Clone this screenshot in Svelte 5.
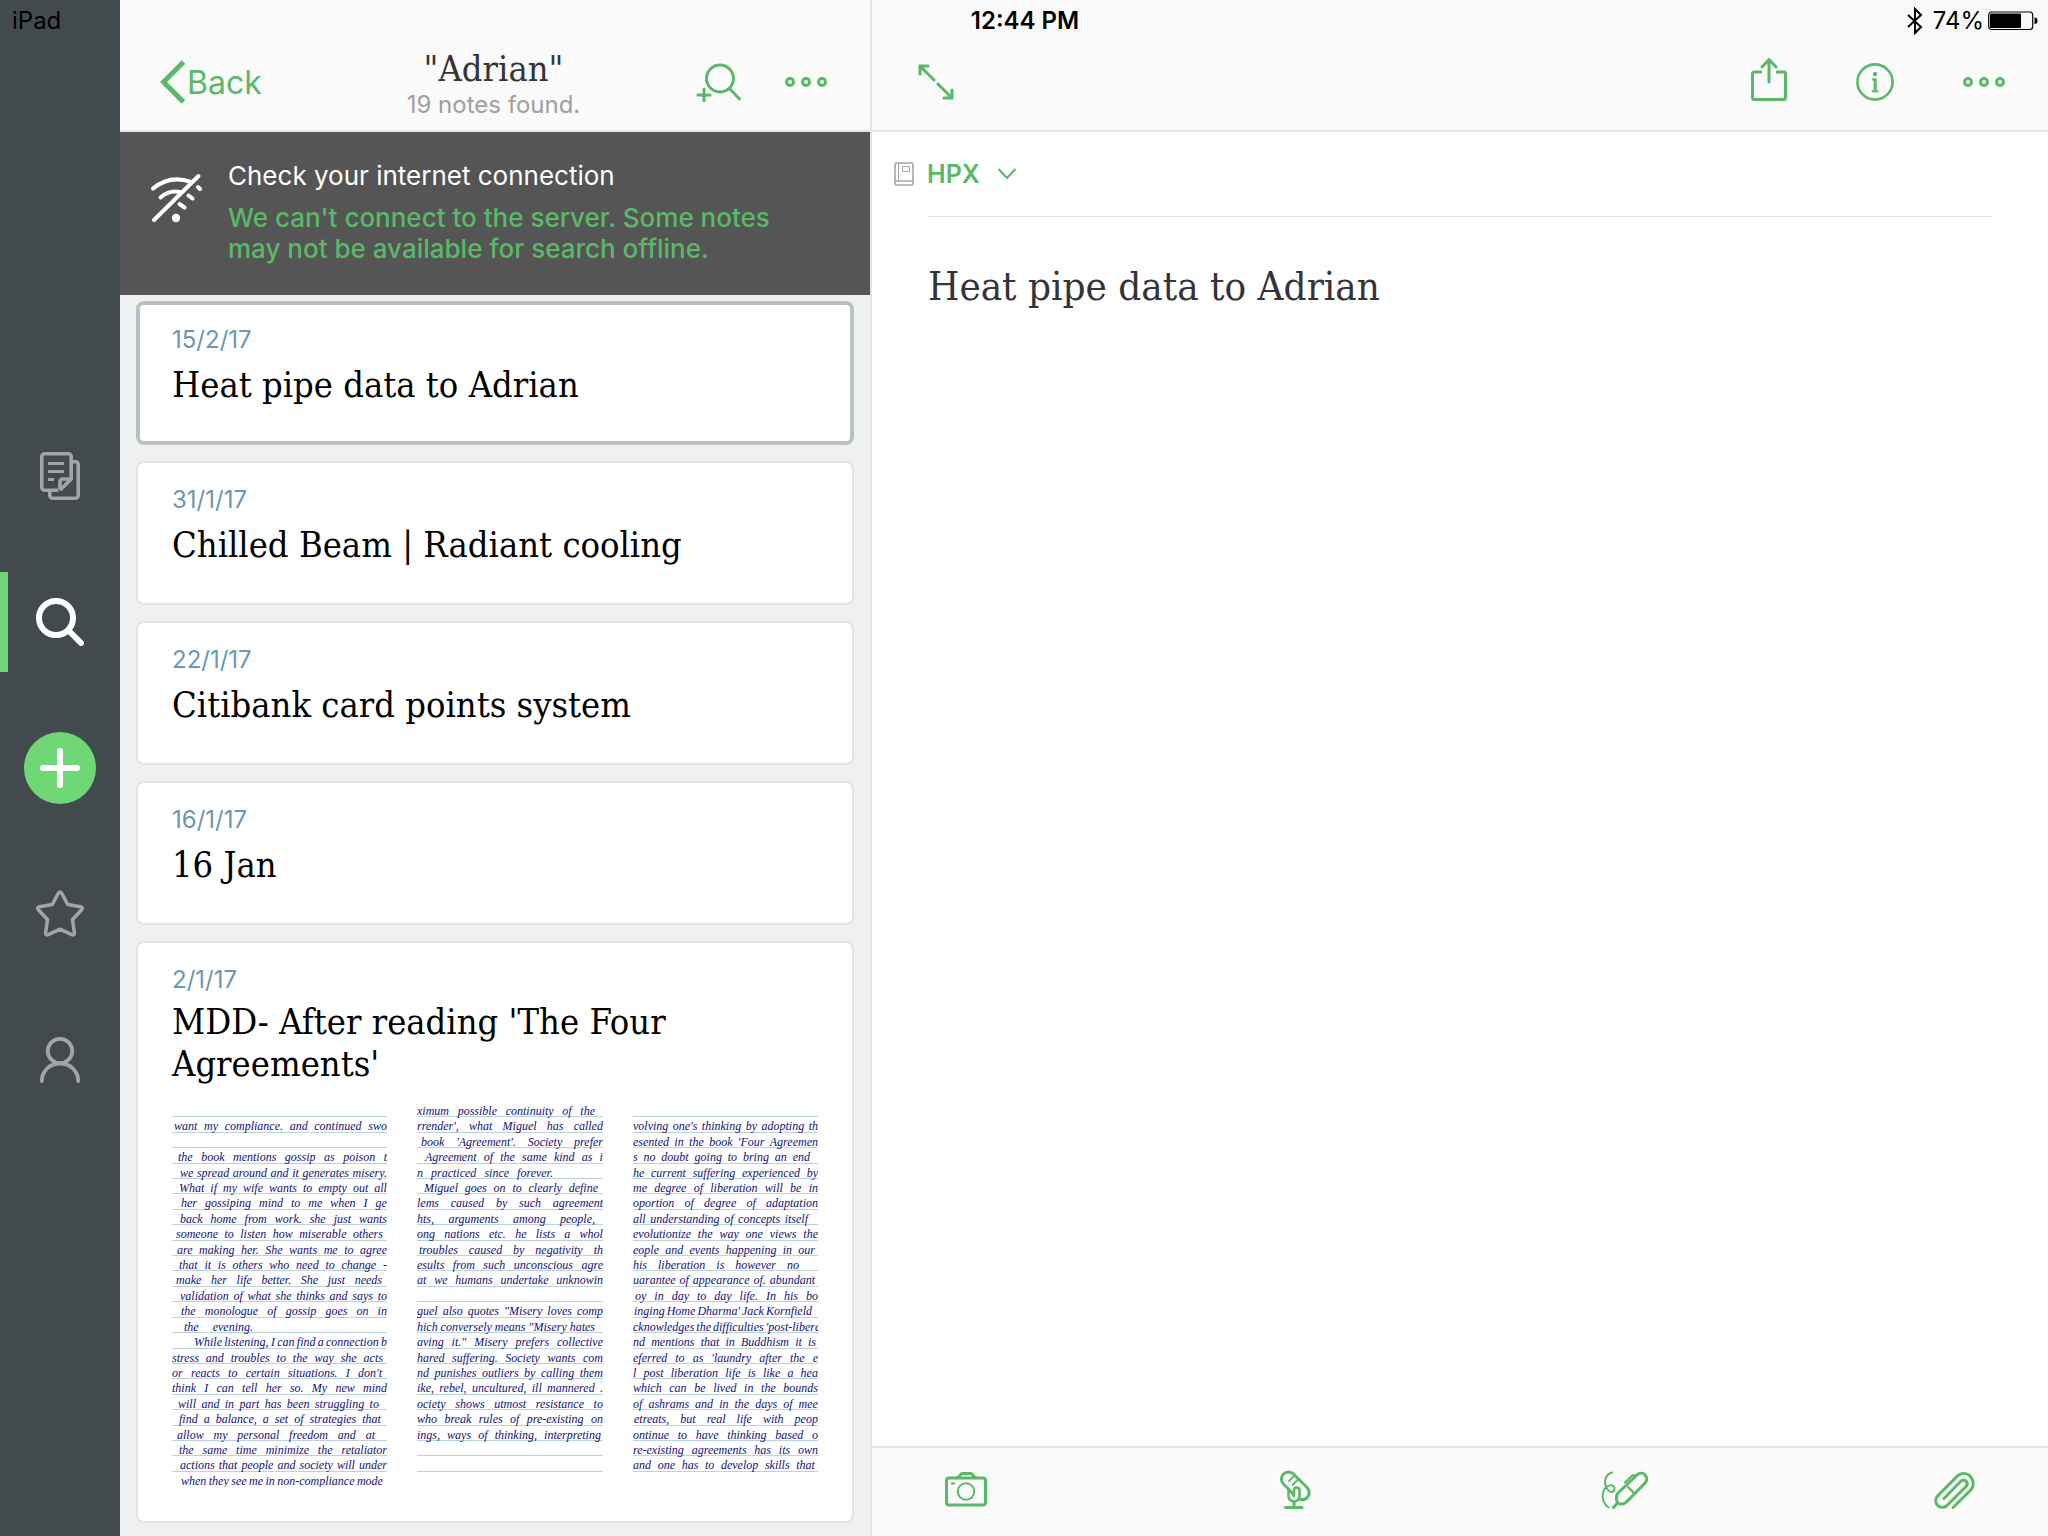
<script lang="ts">
    interface Line {
        text: string;
        from?: number;
        to?: number;
    }

    interface Note {
        date: string;
        title: string;
        pages?: Line[][];
    }

    // A ruled page has 25 rows, an empty text is a blank row.
    // from and to are the left and right margins of the writing, in px.
    const blank: Line = { text: "" };

    const page_one: Line[] = [
        blank,
        { text: "want my compliance. and continued swo", from: 2 },
        blank,
        { text: "the book mentions gossip as poison t", from: 6 },
        { text: "we spread around and it generates misery.", from: 8 },
        { text: "What if my wife wants to empty out all", from: 7 },
        { text: "her gossiping mind to me when I ge", from: 9 },
        { text: "back home from work. she just wants", from: 8 },
        { text: "someone to listen how miserable others", from: 4, to: 4 },
        { text: "are making her. She wants me to agree", from: 5 },
        { text: "that it is others who need to change -", from: 7 },
        { text: "make her life better. She just needs", from: 4, to: 5 },
        { text: "validation of what she thinks and says to", from: 8 },
        { text: "the monologue of gossip goes on in", from: 9 },
        { text: "the evening.", from: 12, to: 134 },
        { text: "While listening, I can find a connection b", from: 22 },
        { text: "stress and troubles to the way she acts", to: 4 },
        { text: "or reacts to certain situations. I don't", to: 5 },
        { text: "think I can tell her so. My new mind" },
        { text: "will and in part has been struggling to", from: 6, to: 8 },
        { text: "find a balance, a set of strategies that", from: 7, to: 6 },
        { text: "allow my personal freedom and at", from: 5, to: 12 },
        { text: "the same time minimize the retaliator", from: 7 },
        { text: "actions that people and society will under", from: 8 },
        { text: "when they see me in non-compliance mode", from: 9, to: 4 },
    ];

    const page_two: Line[] = [
        { text: "ximum possible continuity of the", to: 8 },
        { text: "rrender', what Miguel has called" },
        { text: "book 'Agreement'. Society prefer", from: 4 },
        { text: "Agreement of the same kind as i", from: 8 },
        { text: "n practiced since forever.", to: 50 },
        { text: "Miguel goes on to clearly define", from: 7, to: 5 },
        { text: "lems caused by such agreement" },
        { text: "hts, arguments among people,", to: 8 },
        { text: "ong nations etc. he lists a whol" },
        { text: "troubles caused by negativity th", from: 2 },
        { text: "esults from such unconscious agre" },
        { text: "at we humans undertake unknowin" },
        blank,
        { text: "guel also quotes \"Misery loves comp" },
        { text: "hich conversely means \"Misery hates", to: 8 },
        { text: "aving it.\" Misery prefers collective" },
        { text: "hared suffering. Society wants com" },
        { text: "nd punishes outliers by calling them" },
        { text: "ike, rebel, uncultured, ill mannered ." },
        { text: "ociety shows utmost resistance to" },
        { text: "who break rules of pre-existing on" },
        { text: "ings, ways of thinking, interpreting", to: 2 },
        blank,
        blank,
        blank,
    ];

    const page_three: Line[] = [
        blank,
        { text: "volving one's thinking by adopting th" },
        { text: "esented in the book 'Four Agreemen" },
        { text: "s no doubt going to bring an end", to: 8 },
        { text: "he current suffering experienced by" },
        { text: "me degree of liberation will be in" },
        { text: "oportion of degree of adaptation" },
        { text: "all understanding of concepts itself", to: 10 },
        { text: "evolutionize the way one views the" },
        { text: "eople and events happening in our", to: 3 },
        { text: "his liberation is however no", to: 19 },
        { text: "uarantee of appearance of. abundant", to: 3 },
        { text: "oy in day to day life. In his bo", from: 2 },
        { text: "inging Home Dharma' Jack Kornfield", from: 1, to: 6 },
        { text: "cknowledges the difficulties 'post-liberat" },
        { text: "nd mentions that in Buddhism it is", to: 2 },
        { text: "eferred to as 'laundry after the e" },
        { text: "l post liberation life is like a hea" },
        { text: "which can be lived in the bounds" },
        { text: "of ashrams and in the days of mee" },
        { text: "etreats, but real life with peop", from: 1 },
        { text: "ontinue to have thinking based o" },
        { text: "re-existing agreements has its own" },
        { text: "and one has to develop skills that", to: 3 },
        blank,
    ];

    const notes: Note[] = [
        { date: "15/2/17", title: "Heat pipe data to Adrian" },
        { date: "31/1/17", title: "Chilled Beam | Radiant cooling" },
        { date: "22/1/17", title: "Citibank card points system" },
        { date: "16/1/17", title: "16 Jan" },
        {
            date: "2/1/17",
            title: "MDD- After reading 'The Four Agreements'",
            pages: [page_one, page_two, page_three],
        },
    ];

    let selected = $state(0);
</script>

{#snippet dots()}
    <svg width="42" height="10" viewBox="0 0 42 10" fill="none" stroke="currentColor" stroke-width="3">
        <circle cx="5" cy="5" r="3.5" />
        <circle cx="21" cy="5" r="3.5" />
        <circle cx="37" cy="5" r="3.5" />
    </svg>
{/snippet}

<div class="app">
    <div class="status">
        <span>iPad</span>
        <span class="clock">12:44 PM</span>
        <span class="power">
            <svg width="16" height="28" viewBox="0 0 16 28" fill="none" stroke="#000" stroke-width="2">
                <path d="M1 8l13 12-6 6V2l6 6L1 20" />
            </svg>
            <span>74%</span>
            <svg width="50" height="20" viewBox="0 0 50 20">
                <rect x="0.7" y="1" width="44" height="17.5" rx="3" fill="none" stroke="#000" stroke-width="1.2" />
                <rect x="2" y="2.5" width="31" height="14.5" rx="1" />
                <path d="M46.500 6.500q3 0 3 3.300t-3 3.300z" />
            </svg>
        </span>
    </div>

    <nav class="sidebar">
        <button class="nav-btn" aria-label="Notes">
            <svg width="48" height="52" viewBox="0 0 48 52" fill="none" stroke="currentColor" stroke-width="3.600" stroke-linejoin="round">
                <path d="M22.500 40.200H8.500a2.700 2.700 0 0 1-2.700-2.700V6.500a2.700 2.700 0 0 1 2.700-2.700h24a2.700 2.700 0 0 1 2.700 2.700V29L24 40.200" />
                <path d="M24 39v-7.500a2.500 2.500 0 0 1 2.500-2.500H35M35 11.800h4.500a2.700 2.700 0 0 1 2.700 2.700v31a2.700 2.700 0 0 1-2.700 2.700h-23a2.700 2.700 0 0 1-2.700-2.700V40" />
                <path d="M12 13.500h16M12 21.500h16M12 29.500h6" stroke-width="2.800" />
            </svg>
        </button>
        <button class="nav-btn current" aria-label="Search">
            <svg width="48" height="48" viewBox="0 0 48 48" fill="none" stroke="currentColor" stroke-width="6">
                <circle cx="20" cy="20" r="17" />
                <path d="M33 33l12 12" stroke-linecap="round" />
            </svg>
        </button>
        <button class="nav-btn" aria-label="New note">
            <svg width="72" height="72" viewBox="0 0 72 72">
                <circle cx="36" cy="36" r="36" fill="#6fd775" />
                <path d="M36 19v34M19 36h34" stroke="#fff" stroke-width="6" stroke-linecap="round" />
            </svg>
        </button>
        <button class="nav-btn" aria-label="Shortcuts">
            <svg width="48" height="48" viewBox="0 0 48 48" fill="none" stroke="currentColor" stroke-width="3.500" stroke-linejoin="round">
                <path d="M22.300 3.200q1.700-2.600 3.400 0l6 11.300 12.900 2.300q2.700.7 1 3L36.500 29.500l1.900 13.200q0 2.900-2.800 2L24 39.200l-11.600 5.500q-2.800.9-2.800-2l1.900-13.200L2.400 19.800q-1.700-2.300 1-3l12.900-2.300z" />
            </svg>
        </button>
        <button class="nav-btn" aria-label="Account">
            <svg width="48" height="48" viewBox="0 0 48 48" fill="none" stroke="currentColor" stroke-width="3.800" stroke-linecap="round">
                <circle cx="24" cy="15" r="12.200" />
                <path d="M5.800 45c0-10 8-17.500 18.200-17.500S42.200 35 42.200 45" />
            </svg>
        </button>
    </nav>

    <section class="list">
        <header class="list-header">
            <button class="back">
                <svg width="26" height="44" viewBox="0 0 26 44" fill="none" stroke="currentColor" stroke-width="5">
                    <path d="M23.500 2L3.500 22l20 20" />
                </svg>
                Back
            </button>
            <div class="heading">
                <h1>"Adrian"</h1>
                <p>19 notes found.</p>
            </div>
            <div class="tools">
                <button aria-label="Save search">
                    <svg width="46" height="40" viewBox="0 0 46 40" fill="none" stroke="currentColor" stroke-width="3" stroke-linecap="round">
                        <circle cx="24" cy="16.500" r="13.500" />
                        <path d="M33.500 26.500l10 10.500" />
                        <path d="M8 27v12M2 33h12" />
                    </svg>
                </button>
                <button aria-label="More search options">{@render dots()}</button>
            </div>
        </header>

        <div class="banner">
            <svg width="54" height="54" viewBox="0 0 54 54" fill="none" stroke="#fff" stroke-width="4" stroke-linecap="round">
                <path d="M4 48L48.500 4" />
                <path d="M3 16.500Q20 2.500 41 10" />
                <path d="M10.500 25.500Q19 17.500 30 20" />
                <path d="M48 15l2 2M38.500 23.500l4 3M29.500 32l5 3.500" />
                <circle cx="26" cy="46" r="4.200" fill="#fff" stroke="none" />
            </svg>
            <div class="banner-body">
                <p class="banner-title">Check your internet connection</p>
                <p class="banner-text">We can't connect to the server. Some notes<br />may not be available for search offline.</p>
            </div>
        </div>

        <div class="cards">
            {#each notes as note, i}
                <button class="card" class:selected={selected === i} class:tall={note.pages} onclick={() => (selected = i)}>
                    <span class="date">{note.date}</span>
                    <span class="title">{note.title}</span>
                    {#if note.pages}
                        <span class="pages">
                            {#each note.pages as page}
                                <span class="page">
                                    {#each page as line}
                                        <span class="line">
                                            <span class="ink" style="margin: 0 {line.to ?? 0}px 0 {line.from ?? 0}px">
                                                {#each line.text.split(" ") as word}
                                                    <span>{word}</span>
                                                {/each}
                                            </span>
                                        </span>
                                    {/each}
                                </span>
                            {/each}
                        </span>
                    {/if}
                </button>
            {/each}
        </div>
    </section>

    <main class="note">
        <header class="note-header">
            <button aria-label="Expand note">
                <svg width="36" height="36" viewBox="0 0 36 36" fill="none" stroke="currentColor" stroke-width="3" stroke-linecap="round">
                    <path d="M2 10V2h8M3 3l13 13M34 26v8h-8M33 33L20 20" />
                </svg>
            </button>
            <div class="note-tools">
                <button aria-label="Share">
                    <svg width="36" height="48" viewBox="0 0 36 48" fill="none" stroke="currentColor" stroke-width="3" stroke-linejoin="round">
                        <path d="M11 14H3.500A2 2 0 0 0 1.500 16v23.500a2 2 0 0 0 2 2h29a2 2 0 0 0 2-2V16a2 2 0 0 0-2-2H25" />
                        <path d="M18 2v22M11 9l7-7.500 7 7.500" stroke-linecap="round" />
                    </svg>
                </button>
                <button aria-label="Note info">
                    <svg width="38" height="38" viewBox="0 0 38 38" fill="none" stroke="currentColor">
                        <circle cx="19" cy="19" r="17.600" stroke-width="2.600" />
                        <circle cx="19" cy="11" r="2.200" fill="currentColor" stroke="none" />
                        <path d="M16 16.500h4M15.800 28.200h6.600" stroke-width="2" />
                        <path d="M19.200 15.500v12" stroke-width="3" />
                    </svg>
                </button>
                <button aria-label="More note options">{@render dots()}</button>
            </div>
        </header>

        <div class="note-body">
            <button class="notebook">
                <svg width="20" height="24" viewBox="0 0 20 24" fill="none" stroke="#a6a6a6" stroke-width="1.600">
                    <path d="M19 21.500v-19a1.500 1.500 0 0 0-1.500-1.500h-15A1.500 1.500 0 0 0 1 2.500v19A1.500 1.500 0 0 0 2.500 23h15a1.500 1.500 0 0 0 1.500-1.500M1 20q0-1 1.500-1H19" />
                    <path d="M4.500 1v18M8.500 4.500h7v5h-7z" stroke-width="1" />
                </svg>
                <span>HPX</span>
                <svg width="20" height="12" viewBox="0 0 20 12" fill="none" stroke="currentColor" stroke-width="2" stroke-linecap="round">
                    <path d="M2 1.500l8 8.500 8-8.500" />
                </svg>
            </button>
            <h2>Heat pipe data to Adrian</h2>
        </div>

        <footer class="note-footer">
            <button aria-label="Camera">
                <svg width="48" height="40" viewBox="0 0 48 40" fill="none" stroke="currentColor" stroke-width="3" stroke-linejoin="round">
                    <rect x="4.500" y="8" width="39" height="27" rx="2.500" />
                    <path d="M14.500 8q2-.5 3.500-2.800 1-1.700 2.500-1.700h8q1.500 0 2.500 1.700Q32.500 7.500 34.500 8" />
                    <circle cx="24" cy="21.500" r="8.300" stroke-width="2" />
                    <path d="M9 13.500h4" stroke-width="2" />
                </svg>
            </button>
            <button aria-label="Record audio">
                <svg width="48" height="40" viewBox="0 0 48 40" fill="none" stroke="currentColor" stroke-width="3" stroke-linecap="round" stroke-linejoin="round">
                    <path d="M18.500 20l-6-6A7 7 0 0 1 22.500 4L36 17.500c5 5.500.5 13-6.500 12" />
                    <path d="M17.500 20v6a5.500 5.500 0 0 0 11 0v-5.500c0-4-5.500-4-5.500 0V26l-3.500-5" stroke-width="2.600" />
                    <path d="M23 32v5.500M14.500 37.500h16.500" />
                    <path d="M18 11l5-5M21.500 15l5-5" stroke-width="1.800" />
                </svg>
            </button>
            <button aria-label="Draw">
                <svg width="48" height="40" viewBox="0 0 48 40" fill="none" stroke="currentColor" stroke-width="3" stroke-linecap="round" stroke-linejoin="round">
                    <path d="M15.500 29.500c-.5-3 0-5 2-7L36.500 4.500a5.700 5.700 0 0 1 8 8L26 31.500c-2 2-4 3-7 2.500-2-.4-3-2-3.500-4.500zM16 33.500L12.500 37.500" />
                    <path d="M27 17l6.500 6.500M24 12.500l6.500-6.300q2-2 4.500-.2" stroke-width="2.200" />
                    <path d="M11 2.500C3 5 2.500 14 6.500 19.500c3 4 7.500 2.500 7-1.500-.6-3.500-5-3.500-7.500-1.500C0 21 0 32 7.500 37.500" stroke-width="2" />
                </svg>
            </button>
            <button aria-label="Attach file">
                <svg width="48" height="40" viewBox="0 0 48 40" fill="none" stroke="currentColor" stroke-width="3" stroke-linecap="round">
                    <path d="M23 37.500l17.500-17.300C48 12 38.500-1.500 28 5.500L8 25.500c-6.500 7.500 2.500 15.500 9 10L36 16.500c3.500-4-1.500-8.500-5.500-5L14 28.500" />
                </svg>
            </button>
        </footer>
    </main>
</div>

<style>
    :global(body) {
        margin: 0;
        background: #fff;
    }
    .app {
        position: relative;
        display: grid;
        grid-template-columns: 120px 752px 1fr;
        height: 100vh;
        overflow: hidden;
        font-family: Inter, "Liberation Sans", sans-serif;
        color: #000;
    }
    button {
        margin: 0;
        padding: 0;
        border: none;
        background: none;
        font: inherit;
        color: #5ab968;
        cursor: pointer;
    }
    svg {
        display: block;
        flex: none;
    }
    h1,
    h2,
    p {
        margin: 0;
        font-weight: normal;
    }

    /* lies over the tops of the three columns */
    .status {
        position: absolute;
        top: 0;
        left: 0;
        right: 0;
        display: grid;
        grid-template-columns: 1fr auto 1fr;
        align-items: center;
        height: 41px;
        padding: 0 10px 0 12px;
        font-size: 24px;
    }
    .clock {
        font-weight: 600;
    }
    .power {
        display: flex;
        align-items: center;
        justify-content: flex-end;
        gap: 4px;
    }
    .power span {
        margin-left: 6px;
    }

    .sidebar {
        display: flex;
        flex-direction: column;
        justify-content: center;
        gap: 46px;
        background: #434a4d;
    }
    .nav-btn {
        display: flex;
        align-items: center;
        justify-content: center;
        height: 100px;
        color: #a1a5a7;
    }
    .nav-btn.current {
        color: #fff;
        padding-right: 8px;
        border-left: 8px solid #6fd775;
    }

    .list {
        display: flex;
        flex-direction: column;
        min-height: 0;
        border-right: 2px solid #e3e3e3;
        background: #eff1f0;
    }
    .list-header,
    .note-header {
        display: grid;
        align-items: center;
        box-sizing: border-box;
        flex: none;
        height: 132px;
        padding-top: 34px;
        border-bottom: 2px solid #e3e3e3;
        background: #fafafa;
    }
    .list-header {
        grid-template-columns: 1fr auto 1fr;
        padding-left: 40px;
        padding-right: 43px;
    }
    .back {
        display: flex;
        align-items: center;
        gap: 1px;
        font-size: 32px;
        justify-self: start;
    }
    .heading {
        padding-top: 5px;
        text-align: center;
    }
    .heading h1 {
        font-family: "DejaVu Serif Condensed", "DejaVu Serif", serif;
        font-size: 36px;
        line-height: 40px;
        color: #333438;
    }
    .heading p {
        font-size: 24px;
        line-height: 32px;
        color: #a0a0a0;
    }
    .tools {
        display: flex;
        align-items: center;
        justify-content: flex-end;
        gap: 43px;
    }

    .banner {
        display: flex;
        align-items: center;
        flex: none;
        gap: 24px;
        height: 163px;
        padding-left: 30px;
        background: #555;
        font-size: 26px;
    }
    .banner-body {
        padding-bottom: 4px;
    }
    .banner-title {
        margin-bottom: 10px;
        line-height: 32px;
        color: #fff;
    }
    .banner-text {
        line-height: 31px;
        color: #5ab968;
        font-weight: 500;
    }
    .banner > svg {
        margin-bottom: 30px;
    }

    .cards {
        display: flex;
        flex-direction: column;
        gap: 16px;
        padding: 6px 16px 13px;
        overflow: hidden;
    }
    .card {
        display: flex;
        flex-direction: column;
        align-items: flex-start;
        flex: none;
        box-sizing: border-box;
        min-height: 144px;
        padding: 23px 34px;
        border: 2px solid #e3e3e3;
        border-radius: 8px;
        background: #fff;
        text-align: left;
    }
    .card.selected {
        padding: 21px 32px;
        border: 4px solid #b9c0c6;
    }
    .date {
        font-size: 24px;
        line-height: 28px;
        color: #6a97b5;
    }
    .title {
        margin-top: 10px;
        font-family: "DejaVu Serif Condensed", "DejaVu Serif", serif;
        font-size: 36px;
        line-height: 42px;
        color: #000;
    }
    .tall .title {
        margin-top: 7px;
        max-width: 560px;
    }
    .pages {
        display: grid;
        grid-template-columns: 215fr 186fr 185fr;
        gap: 30px;
        width: 100%;
        height: 385px;
        margin: 17px 0 11px;
    }
    .page {
        display: flex;
        flex-direction: column;
        min-width: 0;
        overflow: hidden;
    }
    .line {
        flex: 1;
        min-height: 0;
        border-bottom: 1px solid #bcd3da;
    }
    .line:last-child {
        border-bottom-color: transparent;
    }
    .ink {
        display: flex;
        justify-content: space-between;
        gap: 2px;
        font-family: "Liberation Serif", serif;
        font-style: italic;
        font-size: 12px;
        line-height: 18px;
        white-space: nowrap;
        color: #12107a;
    }

    .note {
        display: flex;
        flex-direction: column;
        min-width: 0;
    }
    .note-header {
        grid-template-columns: auto 1fr;
        padding-left: 46px;
        padding-right: 43px;
    }
    .note-tools {
        display: flex;
        align-items: center;
        justify-content: flex-end;
        gap: 69px;
    }
    .note-body {
        flex: 1;
    }
    .notebook {
        display: flex;
        align-items: center;
        gap: 13px;
        height: 84px;
        margin-left: 22px;
        font-size: 25px;
        font-weight: 600;
    }
    .notebook span {
        margin-right: 4px;
    }
    h2 {
        margin: 0 56px;
        padding-top: 46px;
        border-top: 1px solid #e3e3e3;
        font-family: "DejaVu Serif Condensed", "DejaVu Serif", serif;
        font-size: 40px;
        line-height: 46px;
        color: #333438;
    }
    .note-footer {
        display: flex;
        align-items: center;
        justify-content: space-between;
        box-sizing: border-box;
        height: 90px;
        padding: 0 70px 4px;
        border-top: 2px solid #e3e3e3;
        background: #fafafa;
    }
</style>
